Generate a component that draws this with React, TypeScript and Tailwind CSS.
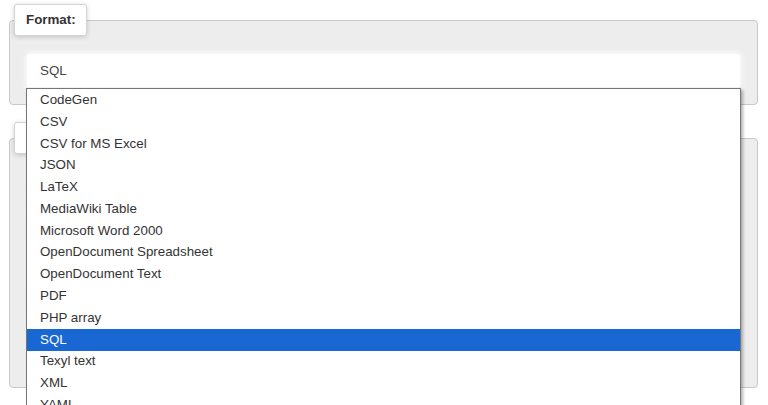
import { useState } from "react";

const formats = [
  "CodeGen",
  "CSV",
  "CSV for MS Excel",
  "JSON",
  "LaTeX",
  "MediaWiki Table",
  "Microsoft Word 2000",
  "OpenDocument Spreadsheet",
  "OpenDocument Text",
  "PDF",
  "PHP array",
  "SQL",
  "Texyl text",
  "XML",
  "YAML",
];

export default function App() {
  const [selected, setSelected] = useState("SQL");

  return (
    <div
      className="relative h-[405px] w-[768px] overflow-hidden bg-white pt-[20px] pl-[9px] text-[#333]"
      style={{ fontFamily: '"Liberation Sans", Arial, sans-serif' }}
    >
      {/* Fieldset: Format */}
      <div className="h-[85px] w-[749px] rounded-[4px] border border-[#c9c9c9] bg-[#ededed]">
        <div className="-mt-[17px] ml-[4px] flex h-[32px] w-[73px] items-center rounded-[3px] border border-[#d4d4d4] bg-white pl-[11px] text-[10pt] font-bold shadow-[0_1px_5px_rgba(0,0,0,0.18)]">
          Format:
        </div>
        <div className="mt-[18px] ml-[17px] flex h-[33px] w-[713px] items-center rounded-[3px] bg-white pl-[13px] text-[10pt] text-[#444] shadow-[0_0_5px_2px_rgba(255,255,255,0.9),0_0_6px_rgba(0,0,0,0.06)]">
          {selected}
        </div>
      </div>

      {/* Fieldset: second group */}
      <div className="mt-[33px] h-[250px] w-[749px] rounded-[4px] border border-[#c9c9c9] bg-[#ededed]">
        <div className="-mt-[17px] ml-[4px] h-[32px] w-[120px] rounded-[3px] border border-[#d4d4d4] bg-white shadow-[0_1px_5px_rgba(0,0,0,0.18)]" />
      </div>

      {/* Open select list */}
      <ul className="absolute top-[88px] left-[26px] w-[715px] border border-b-0 border-[#767676] bg-white text-[10pt] shadow-[2px_2px_3px_rgba(0,0,0,0.3)]">
        {formats.map((f) => (
          <li
            key={f}
            onClick={() => setSelected(f)}
            className={
              f === selected
                ? "flex h-[21.8px] items-center bg-[#1967d2] pl-[13px] text-white"
                : "flex h-[21.8px] items-center pl-[13px] text-[#333]"
            }
          >
            {f}
          </li>
        ))}
      </ul>
    </div>
  );
}
